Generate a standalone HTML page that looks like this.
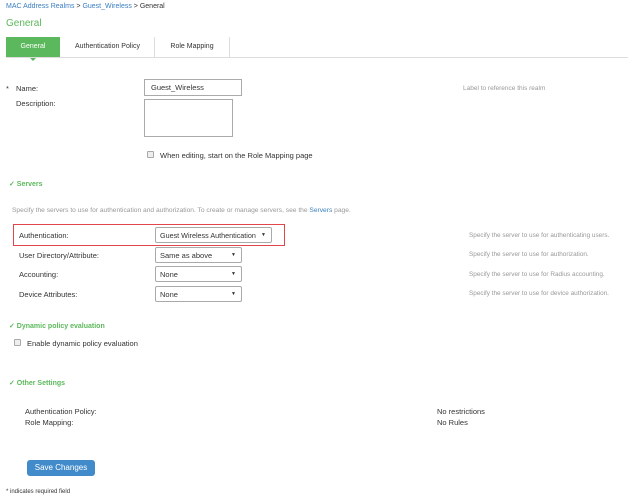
<!DOCTYPE html>
<html><head><style>
*{margin:0;padding:0;box-sizing:border-box}
body{width:628px;height:498px;background:#fff;font-family:"Liberation Sans",sans-serif;color:#333;position:relative;overflow:hidden}
.a{position:absolute;white-space:nowrap}
.s7{font-size:7px}.s8{font-size:7.5px}
.g{color:#5cb85c}.gr{color:#999}.b{color:#3a7ebf}
.sel{position:absolute;border:1px solid #aaa;border-radius:2px;background:#fff;font-size:7.5px;padding:3px 0 0 4px;height:16px}
.sel:after{content:"▼";position:absolute;right:5px;top:4px;font-size:5px}
.cb{position:absolute;width:7px;height:7px;border:1px solid #aaa;border-radius:1px;background:#eee}
.h{font-size:7px;font-weight:bold;color:#5cb85c}
</style></head><body>
<div class="a s7" style="left:6px;top:3px"><span class="b">MAC Address Realms</span> &gt; <span class="b">Guest_Wireless</span> &gt; General</div>
<div class="a g" style="left:6px;top:18px;font-size:10px">General</div>
<div class="a" style="left:6px;top:37px;width:54px;height:20px;background:#5cb85c;color:#fff;font-size:7px;text-align:center;line-height:20px">General</div>
<div class="a" style="left:29px;top:57px;width:0;height:0;border-left:4px solid transparent;border-right:4px solid transparent;border-top:4px solid #5cb85c"></div>
<div class="a s7" style="left:61px;top:37px;width:94px;height:20px;text-align:center;line-height:20px;border-right:1px solid #ddd">Authentication Policy</div>
<div class="a s7" style="left:155px;top:37px;width:75px;height:20px;text-align:center;line-height:20px;border-right:1px solid #ddd">Role Mapping</div>
<div class="a" style="left:6px;top:57px;width:622px;height:1px;background:#ddd"></div>
<div class="a s8" style="left:6px;top:84px">*</div>
<div class="a s8" style="left:16px;top:84px">Name:</div>
<div class="a" style="left:144px;top:79px;width:98px;height:17px;border:1px solid #aaa;font-size:7.5px;padding:3px 0 0 6px">Guest_Wireless</div>
<div class="a gr" style="left:463px;top:85px;font-size:6.5px">Label to reference this realm</div>
<div class="a s8" style="left:16px;top:99px">Description:</div>
<div class="a" style="left:144px;top:99px;width:89px;height:38px;border:1px solid #aaa"></div>
<div class="cb" style="left:147px;top:151px"></div>
<div class="a s8" style="left:160px;top:151px">When editing, start on the Role Mapping page</div>
<div class="a h" style="left:9px;top:180px">&#10003; Servers</div>
<div class="a gr" style="left:12px;top:207px;font-size:6.65px">Specify the servers to use for authentication and authorization. To create or manage servers, see the <span class="b">Servers</span> page.</div>
<div class="a" style="left:13px;top:224px;width:272px;height:22px;border:1.5px solid #e0464c"></div>
<div class="a s8" style="left:19px;top:231px">Authentication:</div>
<div class="sel" style="left:155px;top:227px;width:117px;font-size:7.2px">Guest Wireless Authentication</div>
<div class="a s8" style="left:19px;top:251px">User Directory/Attribute:</div>
<div class="sel" style="left:155px;top:247px;width:87px">Same as above</div>
<div class="a s8" style="left:19px;top:270px">Accounting:</div>
<div class="sel" style="left:155px;top:266px;width:87px">None</div>
<div class="a s8" style="left:19px;top:290px">Device Attributes:</div>
<div class="sel" style="left:155px;top:286px;width:87px">None</div>
<div class="a gr" style="left:469px;top:232px;font-size:6.4px">Specify the server to use for authenticating users.</div>
<div class="a gr" style="left:469px;top:251px;font-size:6.4px">Specify the server to use for authorization.</div>
<div class="a gr" style="left:469px;top:271px;font-size:6.4px">Specify the server to use for Radius accounting.</div>
<div class="a gr" style="left:469px;top:290px;font-size:6.4px">Specify the server to use for device authorization.</div>
<div class="a h" style="left:9px;top:322px">&#10003; Dynamic policy evaluation</div>
<div class="cb" style="left:14px;top:339px"></div>
<div class="a s8" style="left:27px;top:339px">Enable dynamic policy evaluation</div>
<div class="a h" style="left:9px;top:379px">&#10003; Other Settings</div>
<div class="a s8" style="left:25px;top:407px">Authentication Policy:</div>
<div class="a s8" style="left:25px;top:418px">Role Mapping:</div>
<div class="a s8" style="left:437px;top:407px">No restrictions</div>
<div class="a s8" style="left:437px;top:418px">No Rules</div>
<div class="a" style="left:27px;top:460px;width:68px;height:16px;background:#428bca;border-radius:3px;color:#fff;font-size:8px;text-align:center;line-height:16px">Save Changes</div>
<div class="a" style="left:6px;top:489px;font-size:6px">* indicates required field</div>
</body></html>
